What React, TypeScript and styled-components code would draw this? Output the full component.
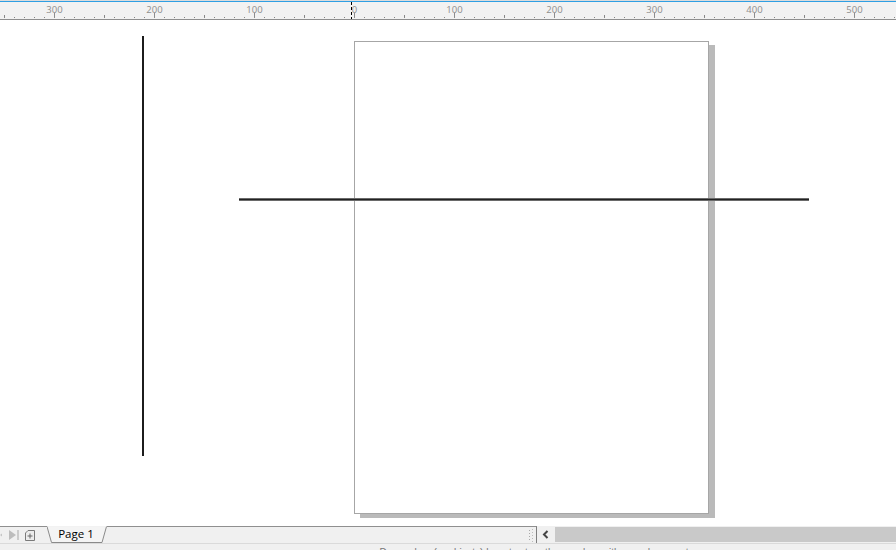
import styled, { createGlobalStyle } from 'styled-components';

const ZERO_X = 354;
const WIDTH = 896;

const GlobalStyle = createGlobalStyle`
  html, body {
    margin: 0;
    padding: 0;
    background: #fff;
  }
  body {
    font-family: "Open Sans", "Liberation Sans", sans-serif;
  }
`;

const Window = styled.div`
  display: flex;
  flex-direction: column;
  width: ${WIDTH}px;
  height: 550px;
  overflow: hidden;
`;

const TitleEdge = styled.div`
  flex: none;
  height: 1px;
  background: #dcdcdc;
`;

const RulerBar = styled.div`
  flex: none;
  height: 17px;
  background: #f2f2f2;
  border-top: 1px solid #2f9fe3;
  border-bottom: 1px solid #8f8f8f;

  svg {
    display: block;
  }
`;

const RulerLabel = styled.text`
  font-family: "Open Sans", "Liberation Sans", sans-serif;
  font-size: 9.5px;
  fill: #8d8d8d;
  text-anchor: middle;
`;

const Canvas = styled.div`
  position: relative;
  flex: 1;
  background: #fff;
`;

const Page = styled.div`
  position: absolute;
  left: ${ZERO_X}px;
  top: 21px;
  width: 353px;
  height: 471px;
  background: #fff;
  border: 1px solid #a6a6a6;
  box-shadow: 6px 4px 0 #bababa;
`;

const HorizontalStroke = styled.div`
  position: absolute;
  left: 239px;
  top: 178px;
  width: 570px;
  height: 1px;
  background: #222;
  border-top: 1px solid #6a6a6a;
  border-bottom: 1px solid #6a6a6a;
`;

const VerticalStroke = styled.div`
  position: absolute;
  left: 142px;
  top: 16px;
  width: 2px;
  height: 420px;
  background: #1c1c1c;
`;

const TabBar = styled.div`
  flex: none;
  display: flex;
  height: 17px;
  background: #f0f0f0;
`;

const PageNav = styled.div`
  flex: none;
  width: 47px;
  height: 100%;
  box-sizing: border-box;
  border-top: 1px solid #8f8f8f;

  svg {
    display: block;
  }
`;

const PageTab = styled.div`
  position: relative;
  flex: none;
  display: flex;
  align-items: center;
  justify-content: center;
  width: 60px;
  height: 100%;
  padding: 0 2px 2px 0;
  box-sizing: border-box;
  font-family: "Open Sans", "Liberation Sans", sans-serif;
  font-size: 11.5px;
  color: #000;

  svg {
    position: absolute;
    inset: 0;
  }

  span {
    position: relative;
  }
`;

const TabFiller = styled.div`
  flex: 1;
  display: flex;
  justify-content: flex-end;
  align-items: center;
  padding-right: 2px;
  border-top: 1px solid #8f8f8f;
  border-right: 1px solid #7f7f7f;

  svg {
    display: block;
  }
`;

const ScrollButton = styled.div`
  flex: none;
  display: flex;
  align-items: center;
  justify-content: center;
  width: 18px;
  height: 100%;
  background: #f0f0f0;
`;

const ScrollTrack = styled.div`
  flex: none;
  width: 341px;
  margin: 1px 0;
  background: #c9c9c9;
`;

const StatusBar = styled.div`
  flex: none;
  height: 6px;
  overflow: hidden;
  background: #f0f0f0;
  border-top: 1px solid #dadada;
  box-sizing: content-box;
`;

const StatusText = styled.div`
  margin-top: 2px;
  text-align: center;
  padding-left: 172px;
  font-family: "Liberation Sans", sans-serif;
  font-size: 10px;
  line-height: 14px;
  color: #777;
  white-space: nowrap;
`;

function Ruler() {
  const ticks: number[] = [];
  for (let x = 4; x < WIDTH; x += 10) ticks.push(x);
  const labels = [-300, -200, -100, 0, 100, 200, 300, 400, 500];

  return (
    <RulerBar>
      <svg width={WIDTH} height={17} viewBox={`0 0 ${WIDTH} 17`}>
        {ticks.map((x) => {
          const unit = x - ZERO_X;
          const isMajor = unit % 100 === 0;
          const isMid = unit % 50 === 0;
          const top = isMajor ? 11 : isMid ? 13 : 15;
          return <rect key={x} x={x} y={top} width={1} height={isMajor ? 5 : isMid ? 3 : 1} fill={isMajor ? '#8d8d8d' : '#888'} />;
        })}
        {labels.map((value) => (
          <RulerLabel key={value} x={ZERO_X + value + 0.5} y={10.5}>
            {Math.abs(value)}
          </RulerLabel>
        ))}
        <line x1={351.5} y1={0} x2={351.5} y2={17} stroke="#000" strokeWidth={1} strokeDasharray="3 2" />
      </svg>
    </RulerBar>
  );
}

export default function App() {
  return (
    <Window>
      <GlobalStyle />
      <TitleEdge />
      <Ruler />
      <Canvas>
        <Page />
        <HorizontalStroke />
        <VerticalStroke />
      </Canvas>
      <TabBar>
        <PageNav>
          <svg width={47} height={16} viewBox="0 0 47 16">
            <path d="M0 8 L2 6.5 V9.5 Z" fill="#c4c4c4" />
            <path d="M9 3 L16 8 L9 13 Z" fill="#bdbdbd" />
            <rect x={17.5} y={3} width={1} height={10} fill="#a8a8a8" />
            <path d="M25.5 6 L28 3.5 H34.5 V13.5 H25.5 Z" fill="#ececec" stroke="#7a7a7a" />
            <path d="M30 6.5 V11.5 M27.5 9 H32.5" stroke="#666" />
          </svg>
        </PageNav>
        <PageTab>
          <svg width={60} height={17} viewBox="0 0 60 17">
            <path d="M0 0.5 L4.5 16.5 H55 L59.5 0.5" fill="#f4f4f4" stroke="#8a8a8a" />
          </svg>
          <span>Page 1</span>
        </PageTab>
        <TabFiller>
          <svg width={6} height={13} viewBox="0 0 6 13">
            {[1, 4, 7, 10].map((y) => (
              <rect key={y} x={1} y={y} width={1} height={1} fill="#a9a9a9" />
            ))}
            {[0, 3, 6, 9, 12].map((y) => (
              <rect key={y} x={4} y={y} width={1} height={1} fill="#bcbcbc" />
            ))}
          </svg>
        </TabFiller>
        <ScrollButton>
          <svg width={8} height={9} viewBox="0 0 8 9">
            <path d="M5.5 1 L2 4.5 L5.5 8" fill="none" stroke="#444" strokeWidth={2} />
          </svg>
        </ScrollButton>
        <ScrollTrack />
      </TabBar>
      <StatusBar>
        <StatusText>Drag colors (or objects) here to store these colors with your document</StatusText>
      </StatusBar>
    </Window>
  );
}
